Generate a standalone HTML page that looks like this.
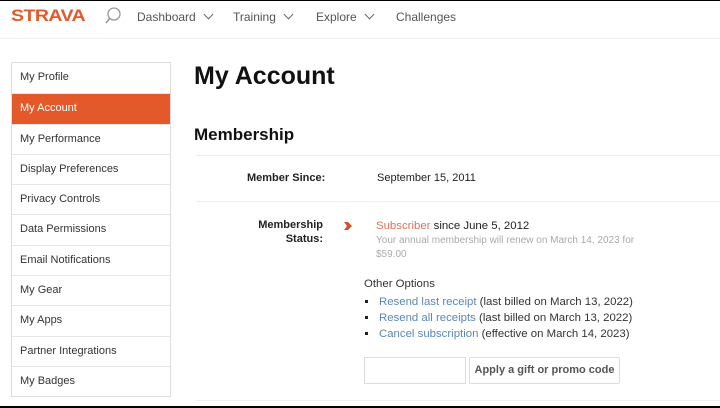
<!DOCTYPE html>
<html><head><style>
*{margin:0;padding:0;box-sizing:border-box}
body{width:720px;height:408px;overflow:hidden;background:#fff;font-family:"Liberation Sans",sans-serif;color:#222;position:relative}
.a{position:absolute;white-space:nowrap}
.nav{font-size:12px;color:#555;top:10px}
.chev{display:inline-block;width:7px;height:7px;border-right:1.3px solid #666;border-bottom:1.3px solid #666;transform:rotate(45deg);margin-left:9px;position:relative;top:-3px}
.side{position:absolute;left:11px;top:62px;width:160px;border:1px solid #ddd}
.side div{height:30.3px;line-height:29px;padding-left:8px;font-size:11px;color:#333;border-top:1px solid #e6e6e6}
.side div:first-child{border-top:none}
.side .on{background:#e3592a;color:#fff}
.hr{position:absolute;left:196px;width:524px;height:1px;background:#eee}
.lnk{color:#5a87b8}
.li{font-size:11.4px;color:#333}
.li:before{content:"";display:inline-block;width:3px;height:3px;background:#222;margin-right:11px;vertical-align:middle}
</style></head><body>
<div class="a" style="left:0;top:0;width:720px;height:1px;background:#000"></div>
<div class="a" style="left:11px;top:6px;font-size:17px;font-weight:bold;color:#e3592a;letter-spacing:-0.5px;transform:scaleX(1.15);transform-origin:left">STRAVA</div>
<svg class="a" style="left:103px;top:6px" width="20" height="20" viewBox="0 0 20 20"><circle cx="11" cy="8" r="6" fill="none" stroke="#999" stroke-width="1.3"/><path d="M7 12L3 17" stroke="#999" stroke-width="1.6"/></svg>
<div class="a nav" style="left:137px">Dashboard<span class="chev"></span></div>
<div class="a nav" style="left:233px">Training<span class="chev"></span></div>
<div class="a nav" style="left:316px">Explore<span class="chev"></span></div>
<div class="a nav" style="left:396px">Challenges</div>
<div class="a" style="left:0;top:38px;width:720px;height:1px;background:#eee"></div>
<div class="side">
<div>My Profile</div><div class="on">My Account</div><div>My Performance</div><div>Display Preferences</div><div>Privacy Controls</div><div>Data Permissions</div><div>Email Notifications</div><div>My Gear</div><div>My Apps</div><div>Partner Integrations</div><div>My Badges</div>
</div>
<div class="a" style="left:194px;top:62px;font-size:25px;font-weight:bold;color:#111">My Account</div>
<div class="a" style="left:194px;top:125px;font-size:17px;font-weight:bold;color:#111">Membership</div>
<div class="hr" style="top:155px"></div>
<div class="a" style="left:247px;top:172px;font-size:11px;font-weight:bold">Member Since:</div>
<div class="a" style="left:377px;top:172px;font-size:11px">September 15, 2011</div>
<div class="hr" style="top:201px"></div>
<div class="a" style="left:238px;top:218px;font-size:11px;font-weight:bold;text-align:right;line-height:14px;width:85px">Membership<br>Status:</div>
<svg class="a" style="left:343px;top:221px" width="10" height="10" viewBox="0 0 10 10"><path d="M1 1H5L9 5L5 9H1L4 5Z" fill="#d4502a"/></svg>
<div class="a" style="left:376px;top:220px;font-size:11.4px"><span style="color:#e66f56">Subscriber</span> since June 5, 2012</div>
<div class="a" style="left:376px;top:234px;font-size:10px;color:#aaa;line-height:14px">Your annual membership will renew on March 14, 2023 for<br>$59.00</div>
<div class="a" style="left:364px;top:278px;font-size:11.4px;color:#333">Other Options</div>
<div class="a li" style="left:365px;top:296px"><span class="lnk">Resend last receipt</span> (last billed on March 13, 2022)</div>
<div class="a li" style="left:365px;top:312px"><span class="lnk">Resend all receipts</span> (last billed on March 13, 2022)</div>
<div class="a li" style="left:365px;top:328px"><span class="lnk">Cancel subscription</span> (effective on March 14, 2023)</div>
<div class="a" style="left:364px;top:357px;width:102px;height:27px;border:1px solid #ddd"></div>
<div class="a" style="left:469px;top:357px;width:151px;height:27px;border:1px solid #ddd;border-radius:2px;font-size:11px;font-weight:bold;color:#555;text-align:center;line-height:25px">Apply a gift or promo code</div>
<div class="hr" style="top:400px"></div>
<div class="a" style="left:0;top:406px;width:720px;height:2px;background:#000"></div>
</body></html>
